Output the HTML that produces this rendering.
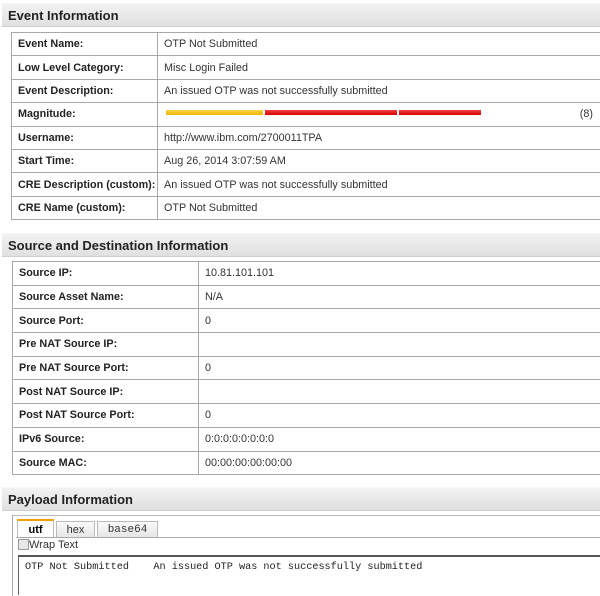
<!DOCTYPE html>
<html><head><style>
body{margin:0;width:600px;height:585px;overflow:hidden;background:#fff;font-family:"Liberation Sans",Arial,sans-serif;position:relative}
.h{position:absolute;left:2px;width:610px;height:24px;background:linear-gradient(#f2f2f2,#e0e0e0);border-top:1px solid #f6f6f6;border-bottom:1px solid #d0d0d0;font-weight:bold;font-size:13px;color:#222;line-height:24px;padding-left:6px;box-sizing:border-box}
table{position:absolute;border-collapse:collapse;font-size:10.8px;color:#333;width:600px;table-layout:fixed}
td{border:1px solid #a8a8a8;padding:0 0 0 6px;height:22.4px;box-sizing:border-box;white-space:nowrap;overflow:hidden}
td.l{font-weight:bold;color:#222}
.bar{position:absolute;height:5px;top:110px}
</style></head><body>
<div class="h" style="top:3px">Event Information</div>
<table style="left:11px;top:32px">
<tr style="height:23.4px"><td class="l" style="width:146px">Event Name:</td><td>OTP Not Submitted</td></tr>
<tr style="height:23.4px"><td class="l">Low Level Category:</td><td>Misc Login Failed</td></tr>
<tr style="height:23.4px"><td class="l">Event Description:</td><td>An issued OTP was not successfully submitted</td></tr>
<tr style="height:23.4px"><td class="l">Magnitude:</td><td style="text-align:right;padding-right:17px">(8)</td></tr>
<tr style="height:23.4px"><td class="l">Username:</td><td>http://www.ibm.com/2700011TPA</td></tr>
<tr style="height:23.4px"><td class="l">Start Time:</td><td>Aug 26, 2014 3:07:59 AM</td></tr>
<tr style="height:23.4px"><td class="l">CRE Description (custom):</td><td>An issued OTP was not successfully submitted</td></tr>
<tr style="height:23.4px"><td class="l">CRE Name (custom):</td><td>OTP Not Submitted</td></tr>
</table>
<div class="bar" style="left:166px;width:97px;background:linear-gradient(#f7d24a,#f0b800)"></div>
<div class="bar" style="left:265px;width:132px;background:linear-gradient(#f04040,#d80000)"></div>
<div class="bar" style="left:399px;width:82px;background:linear-gradient(#f04040,#d80000)"></div>
<div class="h" style="top:233px">Source and Destination Information</div>
<table style="left:12px;top:261px">
<tr style="height:23.7px"><td class="l" style="width:186px">Source IP:</td><td>10.81.101.101</td></tr>
<tr style="height:23.7px"><td class="l">Source Asset Name:</td><td>N/A</td></tr>
<tr style="height:23.7px"><td class="l">Source Port:</td><td>0</td></tr>
<tr style="height:23.7px"><td class="l">Pre NAT Source IP:</td><td></td></tr>
<tr style="height:23.7px"><td class="l">Pre NAT Source Port:</td><td>0</td></tr>
<tr style="height:23.7px"><td class="l">Post NAT Source IP:</td><td></td></tr>
<tr style="height:23.7px"><td class="l">Post NAT Source Port:</td><td>0</td></tr>
<tr style="height:23.7px"><td class="l">IPv6 Source:</td><td>0:0:0:0:0:0:0:0</td></tr>
<tr style="height:23.7px"><td class="l">Source MAC:</td><td>00:00:00:00:00:00</td></tr>
</table>
<div class="h" style="top:487px">Payload Information</div>
<div style="position:absolute;left:12px;top:515px;width:600px;height:80px;border-left:1px solid #aaa;border-top:1px solid #bbb"></div>
<div style="position:absolute;left:16px;top:537px;width:600px;border-top:1px solid #aaa"></div>
<div style="position:absolute;left:17px;top:519px;width:37px;height:18px;border:1px solid #bbb;border-top:2px solid #f0a000;border-bottom:none;background:#fff;font-size:11px;font-weight:bold;text-align:center;line-height:18px;box-sizing:border-box">utf</div>
<div style="position:absolute;left:56px;top:521px;width:39px;height:16px;border:1px solid #bbb;border-bottom:none;background:linear-gradient(#fafafa,#e6e6e6);font-size:11px;text-align:center;line-height:17px;box-sizing:border-box;color:#333">hex</div>
<div style="position:absolute;left:97px;top:521px;width:61px;height:16px;border:1px solid #bbb;border-bottom:none;background:linear-gradient(#fafafa,#e6e6e6);font-size:11px;text-align:center;line-height:17px;box-sizing:border-box;color:#333;font-family:'Liberation Mono',monospace">base64</div>
<div style="position:absolute;left:18px;top:539px;width:9px;height:9px;border:1px solid #999;background:#e8e8e8"></div>
<div style="position:absolute;left:29px;top:539px;font-size:11px;color:#333">Wrap Text</div>
<div style="position:absolute;left:18px;top:555px;width:600px;height:40px;border-left:1px solid #666;border-top:2px solid #555;font-family:'Liberation Mono',monospace;font-size:10.2px;color:#222;padding:5px 0 0 6px;white-space:pre;box-sizing:border-box">OTP Not Submitted    An issued OTP was not successfully submitted</div>
</body></html>
